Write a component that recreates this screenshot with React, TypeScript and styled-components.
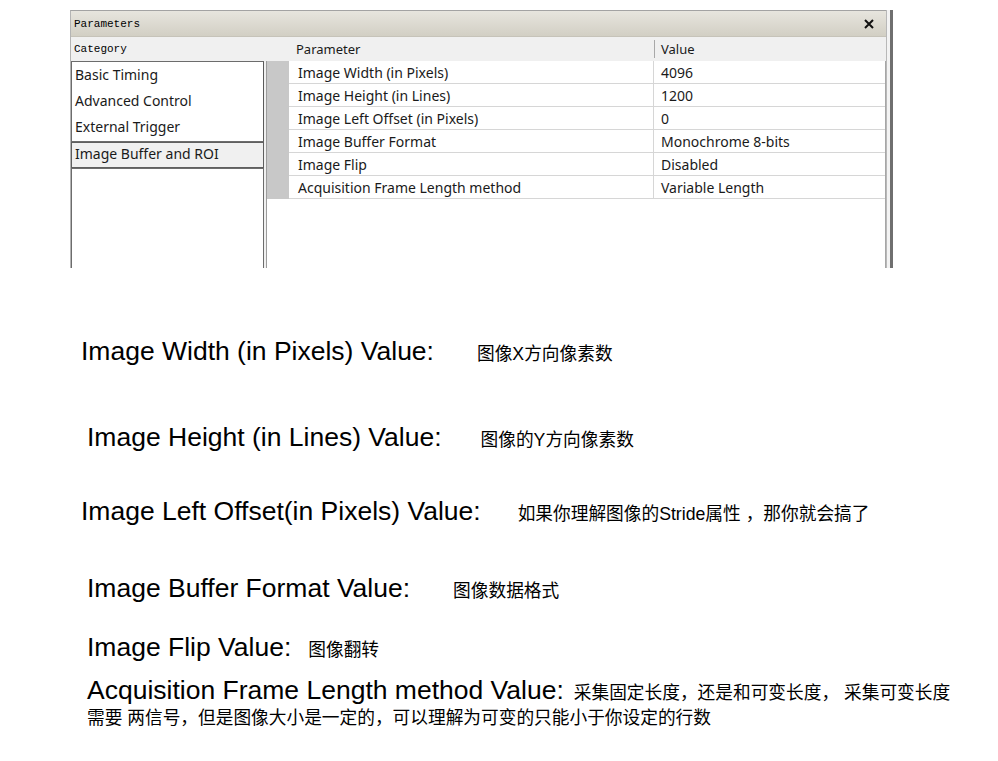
import React from 'react'
import styled, { createGlobalStyle } from 'styled-components'

const GlobalStyle = createGlobalStyle`
  body {
    margin: 0;
    background: #ffffff;
    font-family: 'Liberation Sans', Arial, sans-serif;
  }
`

const Page = styled.main`
  width: 998px;
  padding-top: 10px;
`

/* ---------- parameters window ---------- */

const Panel = styled.section`
  display: flex;
  width: 823px;
  height: 258px;
  margin-left: 70px;
  overflow: hidden;
`
const Frame = styled.div`
  flex: 1;
  display: flex;
  flex-direction: column;
  border-top: 1px solid #a3a3a3;
  border-left: 1px solid #b4b4b4;
  background: #f0f0f0;
`
const FrameEdge = styled.div`
  width: 3px;
  border-left: 1px solid #b8b8b8;
  border-right: 3px solid #6f6f6f;
  background: #f3f3f3;
`
const TitleBar = styled.header`
  height: 25px;
  display: flex;
  align-items: center;
  justify-content: space-between;
  padding: 0 12px 0 3px;
  background: linear-gradient(#e7e5de, #d2cfc4);
  border-bottom: 1px solid #c6c3b9;
  font-family: 'Liberation Mono', 'Courier New', monospace;
  font-size: 11px;
  color: #000;
`
const Body = styled.div`
  flex: 1;
  display: grid;
  grid-template-columns: 193px 1fr;
  column-gap: 2px;
  min-height: 0;
`
const CategoryPane = styled.div`
  display: flex;
  flex-direction: column;
`
const ColumnHead = styled.div`
  height: 24px;
  display: flex;
  align-items: center;
  padding-left: 3px;
  font-family: 'Liberation Mono', 'Courier New', monospace;
  font-size: 11px;
  color: #000;
`
const CategoryList = styled.ul`
  margin: 0;
  padding: 0;
  list-style: none;
  background: #fff;
  border: 1px solid #6c6c6c;
  border-right-color: #5a5a5a;
`
const CategoryItem = styled.li<{ $selected?: boolean }>`
  height: 26.3px;
  display: flex;
  align-items: center;
  padding-left: 3px;
  padding-bottom: 2px;
  box-sizing: border-box;
  font-family: 'Noto Sans', sans-serif;
  font-size: 14px;
  color: #1a1a1a;
  ${(p) =>
    p.$selected &&
    `
    height: 26px;
    background: #f0f0f0;
    border: 1px solid #5f5f5f;
  `}
`
const SelectedWrap = styled.ul`
  margin: 0;
  padding: 0;
  list-style: none;
`
const CategoryRest = styled.div`
  flex: 1;
  background: #fff;
  border: 1px solid #6c6c6c;
  border-bottom: none;
`
const ParamPane = styled.div`
  display: flex;
  flex-direction: column;
  min-width: 0;
`
const ParamHead = styled.div`
  height: 24px;
  display: grid;
  grid-template-columns: 388px 1fr;
  align-items: center;
  font-family: 'Noto Sans', sans-serif;
  font-size: 13px;
  color: #1a1a1a;
`
const HeadCell = styled.div<{ $divider?: boolean }>`
  height: 18px;
  display: flex;
  align-items: center;
  padding-left: ${(p) => (p.$divider ? '6px' : '30px')};
  border-left: ${(p) => (p.$divider ? '1px solid #a8a8a8' : 'none')};
`
const ParamGrid = styled.div`
  flex: 1;
  background: #fff;
  border-left: 1px solid #9c9c9c;
  border-right: 1px solid #a6a6a6;
`
const ParamRow = styled.div`
  height: 23px;
  display: grid;
  grid-template-columns: 22px 364px 1fr;
  font-family: 'Noto Sans', sans-serif;
  font-size: 14px;
  color: #1a1a1a;
`
const RowHeader = styled.div`
  background: #c8c8c8;
`
const Cell = styled.div<{ $value?: boolean }>`
  display: flex;
  align-items: center;
  padding-left: ${(p) => (p.$value ? '7px' : '9px')};
  border-bottom: 1px solid #d6d6d6;
  border-left: ${(p) => (p.$value ? '1px solid #d6d6d6' : 'none')};
  white-space: nowrap;
`

const CloseIcon = () => (
  <svg width="10" height="10" viewBox="0 0 10 10">
    <path d="M1 1 L9 9 M9 1 L1 9" stroke="#111" strokeWidth="2" />
  </svg>
)

/* ---------- notes ---------- */

const Notes = styled.div`
  display: flex;
  flex-direction: column;
`
const Note = styled.p<{ $indent: number; $top: number }>`
  margin: ${(p) => p.$top}px 0 0;
  padding-left: ${(p) => p.$indent}px;
  font-size: 17.7px;
  line-height: 25px;
  color: #000;
`
const Label = styled.span`
  font-family: 'Liberation Sans', Arial, sans-serif;
  font-size: 26.5px;
  line-height: 28px;
`
const Hint = styled.span<{ $gap: number }>`
  margin-left: ${(p) => p.$gap}px;
  font-family: 'Liberation Sans', 'Noto Sans CJK SC', sans-serif;
  font-size: 17.7px;
`

const categories = ['Basic Timing', 'Advanced Control', 'External Trigger']

const params: [string, string][] = [
  ['Image Width (in Pixels)', '4096'],
  ['Image Height (in Lines)', '1200'],
  ['Image Left Offset (in Pixels)', '0'],
  ['Image Buffer Format', 'Monochrome 8-bits'],
  ['Image Flip', 'Disabled'],
  ['Acquisition Frame Length method', 'Variable Length'],
]

export default function App() {
  return (
    <Page>
      <GlobalStyle />
      <Panel>
        <Frame>
          <TitleBar>
            Parameters
            <CloseIcon />
          </TitleBar>
          <Body>
            <CategoryPane>
              <ColumnHead>Category</ColumnHead>
              <CategoryList>
                {categories.map((c) => (
                  <CategoryItem key={c}>{c}</CategoryItem>
                ))}
              </CategoryList>
              <SelectedWrap>
                <CategoryItem $selected>Image Buffer and ROI</CategoryItem>
              </SelectedWrap>
              <CategoryRest />
            </CategoryPane>
            <ParamPane>
              <ParamHead>
                <HeadCell>Parameter</HeadCell>
                <HeadCell $divider>Value</HeadCell>
              </ParamHead>
              <ParamGrid>
                {params.map(([name, value]) => (
                  <ParamRow key={name}>
                    <RowHeader />
                    <Cell>{name}</Cell>
                    <Cell $value>{value}</Cell>
                  </ParamRow>
                ))}
              </ParamGrid>
            </ParamPane>
          </Body>
        </Frame>
        <FrameEdge />
      </Panel>

      <Notes>
        <Note $indent={81} $top={69}>
          <Label>Image Width (in Pixels) Value:</Label>
          <Hint $gap={43}>图像X方向像素数</Hint>
        </Note>
        <Note $indent={87} $top={56}>
          <Label>Image Height (in Lines) Value:</Label>
          <Hint $gap={39}>图像的Y方向像素数</Hint>
        </Note>
        <Note $indent={81} $top={44}>
          <Label>Image Left Offset(in Pixels) Value:</Label>
          <Hint $gap={37}>如果你理解图像的Stride属性 ，那你就会搞了</Hint>
        </Note>
        <Note $indent={87} $top={47}>
          <Label>Image Buffer Format Value:</Label>
          <Hint $gap={43}>图像数据格式</Hint>
        </Note>
        <Note $indent={87} $top={29}>
          <Label>Image Flip Value:</Label>
          <Hint $gap={17}>图像翻转</Hint>
        </Note>
        <Note $indent={87} $top={13}>
          <Label>Acquisition Frame Length method Value:</Label>
          <Hint $gap={10}>
            采集固定长度，还是和可变长度， 采集可变长度
            <br />
            需要 两信号，但是图像大小是一定的，可以理解为可变的只能小于你设定的行数
          </Hint>
        </Note>
      </Notes>
    </Page>
  )
}
